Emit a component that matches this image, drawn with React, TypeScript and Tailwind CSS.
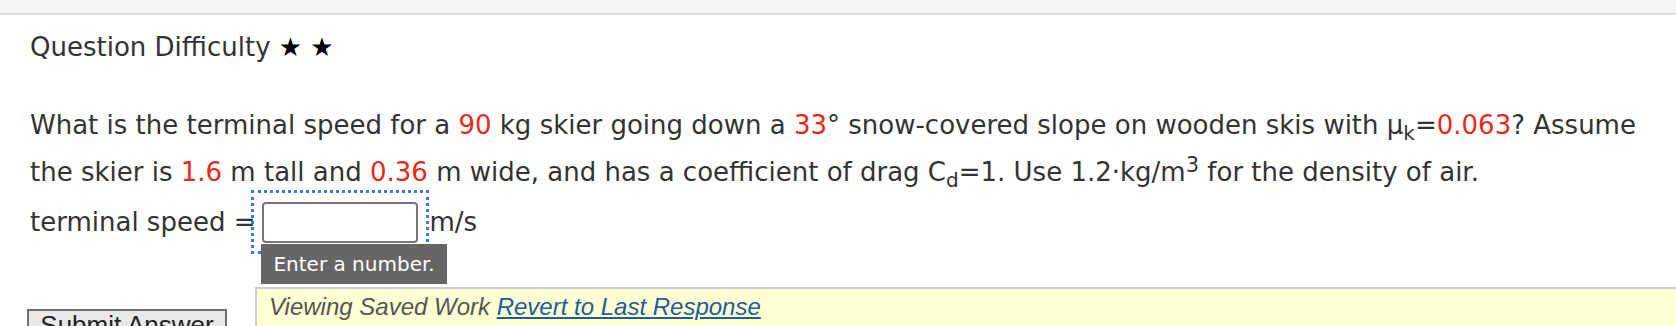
import React from "react";

const red = "text-[#e8291c]";

export default function App() {
  return (
    <div className="relative w-[1676px] h-[326px] overflow-hidden bg-white text-[#333] font-['DejaVu_Sans',sans-serif]">
      <div className="h-[15px] bg-[#f5f5f5] border-b-2 border-[#dddddd]" />
      <div className="pl-[30px]">
        <div className="mt-[17px] text-[26px] leading-[30px] flex items-center whitespace-pre">
          <span>Question Difficulty </span>
          <span className="text-[26px] text-black">★ ★</span>
        </div>
        <p className="mt-[40px] text-[26px] leading-[47px] whitespace-nowrap">
          What is the terminal speed for a <span className={red}>90</span> kg skier going down a{" "}
          <span className={red}>33</span>° snow-covered slope on wooden skis with μ
          <span className="relative top-[6px] text-[20px] leading-[0]">k</span>=<span className={red}>0.063</span>? Assume
          <br />
          the skier is <span className={red}>1.6</span> m tall and <span className={red}>0.36</span> m wide, and has
          a coefficient of drag C<span className="relative top-[6px] text-[20px] leading-[0]">d</span>=1. Use 1.2·kg/m
          <span className="relative -top-[9px] text-[21px] leading-[0]">3</span> for the density of air.
        </p>
        <div className="flex items-center text-[26px] h-[64px] -mt-[6px]">
          <span className="whitespace-pre">terminal speed =</span>
          <div className="relative -ml-[4px] w-[178px] h-[64px] shrink-0 border-[3px] border-dotted border-[#3b7ddd] flex items-center pl-[8px]">
            <div className="w-[156px] h-[41px] border-2 border-[#777] rounded-[4px] bg-white" />
            <div className="absolute left-[7px] top-[51px] w-[186px] h-[40px] bg-[#666] text-white text-[20px] flex items-center pl-[12px] z-10">
              Enter a number.
            </div>
          </div>
          <span>m/s</span>
        </div>
      </div>
      <div className="flex mt-[33px]">
        <div className="w-[255px] shrink-0 relative">
          <div className="absolute left-[27px] top-[22px] w-[200px] h-[44px] border-2 border-[#707070] bg-[#e8e8e8] font-['Liberation_Sans',sans-serif] text-[26px] text-[#222] text-center leading-[28px]">
            Submit Answer
          </div>
        </div>
        <div className="flex-1 h-[40px] bg-[#ffffd4] border-t-2 border-l-2 border-[#cccccc] pl-[12px] pt-[3px] font-['Liberation_Sans',sans-serif] italic text-[24px] leading-[30px] text-[#555] whitespace-nowrap">
          Viewing Saved Work <span className="text-[#1f5c99] underline">Revert to Last Response</span>
        </div>
      </div>
    </div>
  );
}
